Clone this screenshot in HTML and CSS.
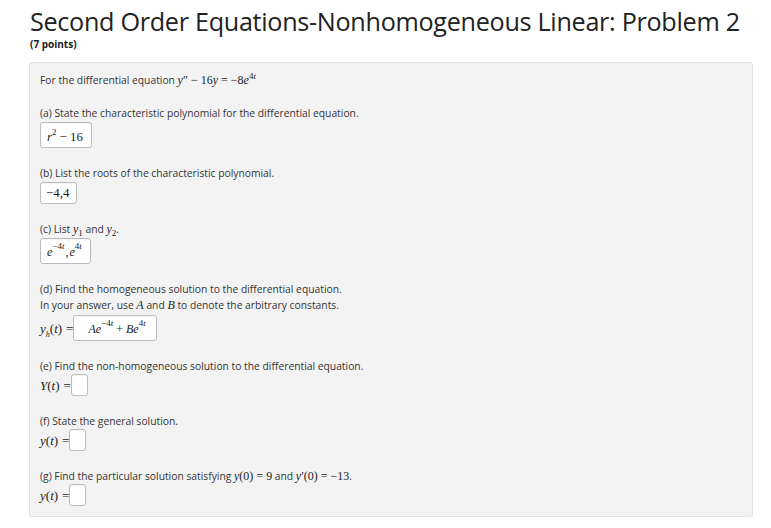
FILE: index.html
```html
<!DOCTYPE html>
<html>
<head>
<meta charset="utf-8">
<link rel="stylesheet" href="styles.css">
</head>
<body>
<h1 class="title">Second Order Equations-Nonhomogeneous Linear: Problem 2</h1>
<div class="points">(7 points)</div>
<div class="panel">
  <p class="intro">For the differential equation <span class="m"><i>y</i>″<span class="op">−</span>16<i>y</i><span class="op">=</span>−8<i>e</i><sup><span class="up">4</span><i>t</i></sup></span></p>

  <div class="part">
    <p class="label">(a) State the characteristic polynomial for the differential equation.</p>
    <div class="row"><span class="box tall"><span class="m big"><i>r</i><sup class="sq">2</sup><span class="op">−</span>16</span></span></div>
  </div>

  <div class="part">
    <p class="label">(b) List the roots of the characteristic polynomial.</p>
    <div class="row"><span class="box"><span class="m big">−4,4</span></span></div>
  </div>

  <div class="part">
    <p class="label">(c) List <span class="m"><i>y</i><sub>1</sub></span> and <span class="m"><i>y</i><sub>2</sub></span>.</p>
    <div class="row"><span class="box tall"><span class="m"><i>e</i><sup class="hi">−4<i>t</i></sup><span class="comma">,</span><i>e</i><sup class="hi">4<i>t</i></sup></span></span></div>
  </div>

  <div class="part">
    <p class="label">(d) Find the homogeneous solution to the differential equation.</p>
    <p class="label">In your answer, use <span class="m"><i>A</i></span> and <span class="m"><i>B</i></span> to denote the arbitrary constants.</p>
    <div class="row"><span class="m lhs"><i>y</i><sub class="h"><i>h</i></sub>(<i>t</i>)<span class="eq">=</span></span><span class="box tall wide"><span class="m"><i>Ae</i><sup class="hi">−4<i>t</i></sup><span class="op">+</span><i>Be</i><sup class="hi">4<i>t</i></sup></span></span></div>
  </div>

  <div class="part">
    <p class="label">(e) Find the non-homogeneous solution to the differential equation.</p>
    <div class="row flat"><span class="m lhs"><i>Y</i>(<i>t</i>)<span class="eq">=</span></span><span class="box empty"></span></div>
  </div>

  <div class="part">
    <p class="label">(f) State the general solution.</p>
    <div class="row flat"><span class="m lhs"><i>y</i>(<i>t</i>)<span class="eq">=</span></span><span class="box empty"></span></div>
  </div>

  <div class="part">
    <p class="label">(g) Find the particular solution satisfying <span class="m"><i>y</i>(0)<span class="op">=</span>9</span> and <span class="m"><i>y</i>′(0)<span class="op">=</span>−13</span>.</p>
    <div class="row flat"><span class="m lhs"><i>y</i>(<i>t</i>)<span class="eq">=</span></span><span class="box empty"></span></div>
  </div>
</div>
</body>
</html>
```
FILE: styles.css
```css
html, body {
  margin: 0;
  padding: 0;
  background: #ffffff;
}
body {
  font-family: "Open Sans", "Noto Sans", sans-serif;
  color: #333333;
}
.title {
  margin: 0;
  padding: 4px 0 0 30px;
  font-size: 25.2px;
  line-height: 34px;
  font-weight: 400;
  color: #222222;
  letter-spacing: -0.3px;
}
.points {
  padding: 0 0 0 30px;
  font-size: 10px;
  font-weight: 700;
  line-height: 12px;
  color: #222222;
  margin-bottom: 12px;
}
.panel {
  margin: 0 18px 0 29px;
  background: #f3f3f3;
  border: 1px solid #e2e2e2;
  border-radius: 3px;
  padding: 9px 10px 10px 10px;
}
p {
  margin: 0;
}
.intro, .label {
  font-size: 10.3px;
  line-height: 16px;
}
.label + .label {
  line-height: 17px;
}
.part {
  margin-top: 17px;
}
.m {
  font-family: "Liberation Serif", "DejaVu Serif", serif;
  font-size: 12px;
  color: #222222;
}
.m.big {
  font-size: 13px;
}
.op {
  margin: 0 3px;
}
.comma {
  margin: 0 1px;
}
.eq {
  margin-left: 4px;
}
.m sup, .m sub {
  font-size: 9px;
  line-height: 0;
}
.row {
  display: flex;
  align-items: center;
  margin-top: 1px;
}
.row.flat {
  margin-top: 0;
  height: 22px;
}
.lhs {
  font-size: 13px;
  line-height: 15px;
  white-space: nowrap;
}
.box {
  display: inline-flex;
  align-items: center;
  background: #ffffff;
  border: 1px solid #bbbbbb;
  border-radius: 3px;
  height: 22px;
  box-sizing: border-box;
  padding: 0 6px 0 5px;
  box-shadow: inset 0 1px 1px rgba(0,0,0,0.05);
}
.box.tall {
  height: 26px;
  padding-top: 3px;
  padding-left: 6px;
  padding-right: 8px;
}
.box.wide {
  padding: 3px 10px 0 14px;
}
.box.empty {
  width: 17px;
  padding: 0;
}
.sq {
  vertical-align: 6px;
}
.hi {
  vertical-align: 7px;
}
.m sub.h {
  font-size: 8px;
}
.up {
  font-style: normal;
}
```
